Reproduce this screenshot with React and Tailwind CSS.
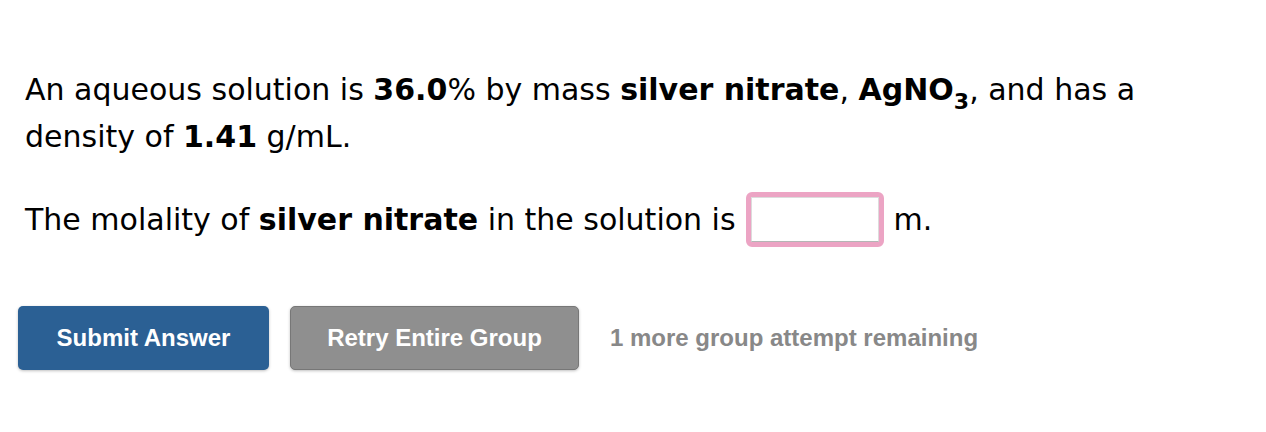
export default function App() {
  return (
    <div className="w-[1266px] h-[432px] bg-white overflow-hidden relative">
      <div className="pl-[25px] pt-[66px] text-black text-[30px] leading-[47px]" style={{ fontFamily: 'Verdana, "DejaVu Sans", sans-serif' }}>
        <p>
          An aqueous solution is <b>36.0</b>% by mass <b>silver nitrate</b>, <b>AgNO<span className="text-[22px] relative top-[9px] leading-none">3</span></b>, and has a<br />density of <b>1.41</b> g/mL.
        </p>
        <div className="mt-[32px] flex items-center">
          <span>The molality of <b>silver nitrate</b> in the solution is</span>
          <span className="ml-[10px] inline-block w-[138px] h-[55px] rounded-[6px] border-[5px] border-[#eca4c4] bg-white">
            <span className="block w-full h-full border border-[#dcdcdc] border-b-[#b5b5b5]" />
          </span>
          <span className="ml-[10px]">m.</span>
        </div>
      </div>
      <div className="pl-[18px] mt-[59px] flex items-center gap-[21px]" style={{ fontFamily: '"Liberation Sans", Arial, sans-serif' }}>
        <button className="w-[251px] h-[64px] rounded-[5px] bg-[#2b6094] text-white font-bold text-[24px] shadow-[0_1px_3px_rgba(0,0,0,0.25)]">
          Submit Answer
        </button>
        <button className="w-[289px] h-[64px] rounded-[5px] bg-[#8f8f8f] border border-[#777] text-white font-bold text-[24px] shadow-[0_1px_3px_rgba(0,0,0,0.25)]">
          Retry Entire Group
        </button>
        <span className="ml-[10px] text-[#888] font-bold text-[24px]">1 more group attempt remaining</span>
      </div>
    </div>
  );
}
